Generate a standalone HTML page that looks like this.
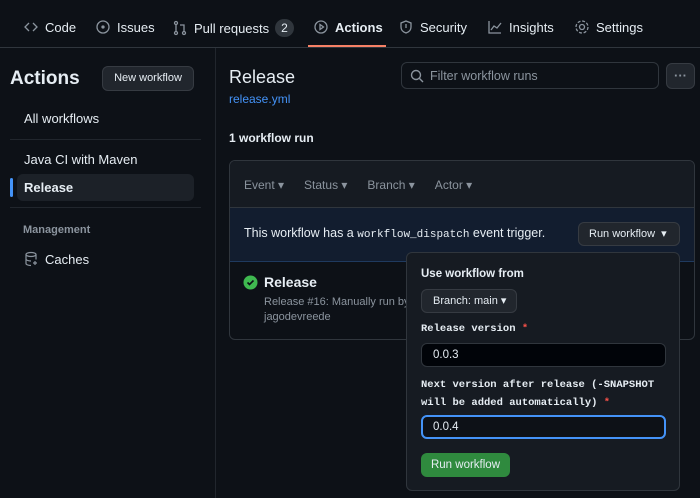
<!DOCTYPE html>
<html><head><style>
*{box-sizing:border-box;margin:0;padding:0}
body{width:700px;height:498px;background:#0d1117;color:#e6edf3;font-family:"Liberation Sans",sans-serif;font-size:13px;position:relative;overflow:hidden}
.a{position:absolute}
.nav{left:0;top:0;width:700px;height:48px;border-bottom:1px solid #30363d}
.ni{top:19px;font-size:13px;color:#e6edf3;display:flex;align-items:center;gap:6px}
.ni svg{stroke:#8b949e;fill:none;stroke-width:1.3}
.mono{font-family:"Liberation Mono",monospace}
.btn{background:#21262d;border:1px solid #363b42;border-radius:6px;color:#e6edf3}
</style></head><body>
<div class="a nav"></div>
<div class="a ni" style="left:23px"><svg width="16" height="16"><path d="M6 4L2 8l4 4M10 4l4 4-4 4"/></svg>Code</div>
<div class="a ni" style="left:95px"><svg width="16" height="16"><circle cx="8" cy="8" r="6"/><circle cx="8" cy="8" r="1" fill="#8b949e"/></svg>Issues</div>
<div class="a ni" style="left:172px"><svg width="16" height="16"><circle cx="4" cy="3" r="1.5"/><circle cx="4" cy="13" r="1.5"/><circle cx="12" cy="13" r="1.5"/><path d="M4 5v6M12 11V5H8"/></svg>Pull requests <span style="background:#30363d;border-radius:10px;padding:2px 6px;font-size:12px">2</span></div>
<div class="a ni" style="left:313px;font-weight:bold"><svg width="16" height="16"><circle cx="8" cy="8" r="6"/><path d="M7 5.5v5l3.5-2.5z"/></svg>Actions</div>
<div class="a" style="left:308px;top:45px;width:78px;height:2px;background:#f78166"></div>
<div class="a ni" style="left:398px"><svg width="16" height="16"><path d="M8 2l5 2v4c0 3-2 5-5 6-3-1-5-3-5-6V4z"/><path d="M8 5v4"/></svg>Security</div>
<div class="a ni" style="left:487px"><svg width="16" height="16"><path d="M2 2v12h12M4 11l3-4 3 2 4-5"/></svg>Insights</div>
<div class="a ni" style="left:574px"><svg width="16" height="16"><circle cx="8" cy="8" r="2.5"/><circle cx="8" cy="8" r="6" stroke-dasharray="3 1.7"/></svg>Settings</div>

<div class="a" style="left:215px;top:48px;width:1px;height:450px;background:#21262d"></div>
<div class="a" style="left:10px;top:68px;font-size:19px;font-weight:bold">Actions</div>
<div class="a btn" style="left:102px;top:66px;width:92px;height:25px;font-size:11px;text-align:center;line-height:23px">New workflow</div>
<div class="a" style="left:24px;top:111px">All workflows</div>
<div class="a" style="left:10px;top:139px;width:191px;height:1px;background:#21262d"></div>
<div class="a" style="left:24px;top:152px">Java CI with Maven</div>
<div class="a" style="left:17px;top:174px;width:177px;height:27px;background:#1c2128;border-radius:6px"></div>
<div class="a" style="left:10px;top:178px;width:3px;height:19px;background:#4493f8;border-radius:2px"></div>
<div class="a" style="left:24px;top:180px;font-weight:bold">Release</div>
<div class="a" style="left:10px;top:207px;width:191px;height:1px;background:#21262d"></div>
<div class="a" style="left:23px;top:224px;font-size:11px;color:#8b949e;font-weight:bold">Management</div>
<div class="a" style="left:24px;top:251px;display:flex;gap:6px;align-items:center"><svg width="15" height="16" fill="none" stroke="#8b949e" stroke-width="1.2"><ellipse cx="7" cy="3.5" rx="5" ry="2"/><path d="M2 3.5v9c0 1 2 2 5 2M12 3.5v5M2 8c0 1 2 2 5 2"/><path d="M11 10v4M9 12h4"/></svg>Caches</div>

<div class="a" style="left:229px;top:67px;font-size:18px">Release</div>
<div class="a" style="left:229px;top:92px;color:#4493f8;font-size:12px">release.yml</div>
<div class="a" style="left:401px;top:62px;width:258px;height:27px;border:1px solid #30363d;border-radius:6px;color:#8b949e;padding:6px 0 0 28px;font-size:12.5px">Filter workflow runs</div>
<svg class="a" style="left:410px;top:69px" width="14" height="14" fill="none" stroke="#8b949e" stroke-width="1.4"><circle cx="6" cy="6" r="4.5"/><path d="M9.5 9.5l3.5 3.5"/></svg>
<div class="a btn" style="left:666px;top:63px;width:29px;height:26px;text-align:center;color:#8b949e;line-height:24px;font-weight:bold">···</div>
<div class="a" style="left:229px;top:131px;font-weight:bold;font-size:12px">1 workflow run</div>

<div class="a" style="left:229px;top:160px;width:466px;height:180px;border:1px solid #30363d;border-radius:6px;background:#0d1117;overflow:hidden">
<div style="height:47px;background:#161b22;border-bottom:1px solid #30363d;color:#8b949e;font-size:12px;padding:17px 0 0 14px;word-spacing:0">Event ▾&nbsp;&nbsp;&nbsp;&nbsp;&nbsp;&nbsp;Status ▾&nbsp;&nbsp;&nbsp;&nbsp;&nbsp;&nbsp;Branch ▾&nbsp;&nbsp;&nbsp;&nbsp;&nbsp;&nbsp;Actor ▾</div>
<div style="height:54px;background:#121d2f;border-bottom:1px solid #1f3a5f;padding:18px 0 0 14px;font-size:12.5px">This workflow has a <span class="mono" style="font-size:11px">workflow_dispatch</span> event trigger.</div>
</div>
<div class="a btn" style="left:578px;top:222px;width:102px;height:24px;font-size:11px;line-height:22px;padding-left:10px">Run workflow &nbsp;▾</div>
<svg class="a" style="left:243px;top:275px" width="15" height="15"><circle cx="7.5" cy="7.5" r="7" fill="#3fb950"/><path d="M4.5 7.5l2 2 4-4" stroke="#0d1117" stroke-width="1.6" fill="none"/></svg>
<div class="a" style="left:264px;top:274px;font-size:14px;font-weight:bold">Release</div>
<div class="a" style="left:264px;top:296px;font-size:11px;color:#8b949e">Release #16: Manually run by</div>
<div class="a" style="left:264px;top:311px;font-size:11px;color:#8b949e">jagodevreede</div>

<div class="a" style="left:406px;top:252px;width:274px;height:239px;background:#161b22;border:1px solid #30363d;border-radius:6px"></div>
<div class="a" style="left:421px;top:268px;font-size:11.5px;font-weight:bold">Use workflow from</div>
<div class="a btn" style="left:421px;top:289px;width:96px;height:24px;font-size:11px;line-height:22px;padding-left:11px">Branch: main ▾</div>
<div class="a mono" style="left:421px;top:323px;font-size:10.5px;font-weight:bold">Release version <span style="color:#f85149">*</span></div>
<div class="a" style="left:421px;top:343px;width:245px;height:24px;background:#010409;border:1px solid #30363d;border-radius:6px;font-size:11.5px;padding:5px 0 0 11px">0.0.3</div>
<div class="a mono" style="left:421px;top:376px;font-size:10.5px;font-weight:bold;line-height:18px">Next version after release (-SNAPSHOT<br>will be added automatically) <span style="color:#f85149">*</span></div>
<div class="a" style="left:421px;top:415px;width:245px;height:24px;background:#0d1117;border:2px solid #4493f8;border-radius:6px;font-size:11.5px;padding:4px 0 0 10px">0.0.4</div>
<div class="a" style="left:421px;top:453px;width:89px;height:24px;background:#2f8a3e;border-radius:6px;font-size:11.5px;line-height:24px;text-align:center">Run workflow</div>
</body></html>
